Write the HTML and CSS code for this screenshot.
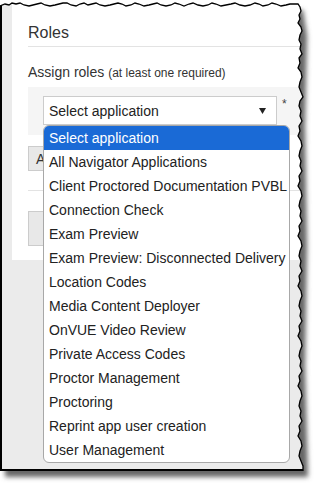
FILE: index.html
```html
<!DOCTYPE html>
<html lang="en">
<head>
    <meta charset="UTF-8">
    <meta name="viewport" content="width=device-width, initial-scale=1.0">
    <title>Roles</title>
    <link rel="stylesheet" href="styles.css">
</head>
<body>
    <div class="screen">
        <div class="panel">
            <h2 class="panel-title">Roles</h2>

            <div class="field-label">Assign roles <small>(at least one required)</small></div>

            <div class="role-box">
                <div class="select-row">
                    <div class="select-wrap">
                        <div class="select">
                            <span>Select application</span>
                            <svg class="caret" width="7" height="6" viewBox="0 0 7 6"><path d="M0 0H7L3.5 6Z" fill="#222"/></svg>
                        </div>
                        <ul class="dropdown">
                            <li class="selected">Select application</li>
                            <li>All Navigator Applications</li>
                            <li>Client Proctored Documentation PVBL</li>
                            <li>Connection Check</li>
                            <li>Exam Preview</li>
                            <li>Exam Preview: Disconnected Delivery</li>
                            <li>Location Codes</li>
                            <li>Media Content Deployer</li>
                            <li>OnVUE Video Review</li>
                            <li>Private Access Codes</li>
                            <li>Proctor Management</li>
                            <li>Proctoring</li>
                            <li>Reprint app user creation</li>
                            <li>User Management</li>
                        </ul>
                    </div>
                    <span class="required">*</span>
                </div>
            </div>

            <button class="btn">A</button>
            <hr class="divider">
            <div class="btn btn-large"></div>
        </div>
    </div>

    <!-- torn paper edge over the screenshot -->
    <svg class="torn" width="321" height="486" viewBox="0 0 321 486">
        <defs>
            <filter id="blur" x="-10%" y="-10%" width="130%" height="130%">
                <feGaussianBlur stdDeviation="2.5"/>
            </filter>
            <clipPath id="outside">
                <path clip-rule="evenodd" d="M0 0H321V486H0Z M0 6L5 4L9 5L12 3L16 4L20 3L24 5L29 6L33 5L37 4L41 3L45 5L50 6L55 5L59 4L63 3L67 3L71 5L76 6L80 4L84 3L88 5L92 4L96 3L100 5L105 6L110 5L114 4L118 3L122 4L126 6L131 5L135 3L139 4L144 6L149 5L153 4L157 3L161 5L166 6L171 5L175 3L179 4L184 6L189 4L193 3L198 5L203 6L208 5L212 3L216 4L221 6L226 5L231 4L235 3L240 5L245 6L250 5L255 3L259 4L263 6L268 5L272 3L276 4L281 6L286 5L290 4L294 4L298 4L300 7L301 11L299 15L300 19L298 23L301 27L302 31L300 35L299 40L301 44L300 49L302 54L299 58L300 63L298 68L301 72L302 77L300 82L299 87L301 92L303 97L300 101L299 106L301 111L300 116L302 121L299 126L300 131L298 136L301 141L302 146L300 151L299 156L301 161L300 166L302 171L299 176L300 181L298 186L301 191L302 196L300 201L299 206L301 211L300 216L302 221L299 226L300 231L298 236L301 241L302 246L300 251L299 256L301 261L300 266L302 271L299 276L300 281L298 286L301 291L302 296L300 301L299 306L301 311L300 316L302 321L299 326L300 331L298 336L301 341L302 346L300 351L299 356L301 361L300 366L302 371L299 376L300 381L298 386L301 391L302 396L300 401L299 406L301 411L300 416L302 421L299 426L300 431L298 436L301 441L302 446L300 451L299 456L301 461L303 466L303 471L0 471Z"/>
            </clipPath>
        </defs>
        <g clip-path="url(#outside)">
            <rect width="321" height="486" fill="#fff"/>
            <path transform="translate(5 6)" filter="url(#blur)" fill="#666" d="M0 6L298 4L302 30L300 120L302 240L300 360L303 471L0 471Z"/>
        </g>
        <path class="edge" d="M0 6L5 4L9 5L12 3L16 4L20 3L24 5L29 6L33 5L37 4L41 3L45 5L50 6L55 5L59 4L63 3L67 3L71 5L76 6L80 4L84 3L88 5L92 4L96 3L100 5L105 6L110 5L114 4L118 3L122 4L126 6L131 5L135 3L139 4L144 6L149 5L153 4L157 3L161 5L166 6L171 5L175 3L179 4L184 6L189 4L193 3L198 5L203 6L208 5L212 3L216 4L221 6L226 5L231 4L235 3L240 5L245 6L250 5L255 3L259 4L263 6L268 5L272 3L276 4L281 6L286 5L290 4L294 4L298 4L300 7L301 11L299 15L300 19L298 23L301 27L302 31L300 35L299 40L301 44L300 49L302 54L299 58L300 63L298 68L301 72L302 77L300 82L299 87L301 92L303 97L300 101L299 106L301 111L300 116L302 121L299 126L300 131L298 136L301 141L302 146L300 151L299 156L301 161L300 166L302 171L299 176L300 181L298 186L301 191L302 196L300 201L299 206L301 211L300 216L302 221L299 226L300 231L298 236L301 241L302 246L300 251L299 256L301 261L300 266L302 271L299 276L300 281L298 286L301 291L302 296L300 301L299 306L301 311L300 316L302 321L299 326L300 331L298 336L301 341L302 346L300 351L299 356L301 361L300 366L302 371L299 376L300 381L298 386L301 391L302 396L300 401L299 406L301 411L300 416L302 421L299 426L300 431L298 436L301 441L302 446L300 451L299 456L301 461L303 466L303 471"/>
    </svg>
</body>
</html>
```

FILE: styles.css
```css
body {
    margin: 0;
    background: #fff;
    font-family: "Liberation Sans", Arial, sans-serif;
    color: #333;
}
.screen {
    position: relative;
    width: 303px;
    height: 469px;
    background-color: #ebebeb;
    border-left: 2px solid #000;
    border-bottom: 2px solid #000;
    overflow: hidden;
}
.panel {
    margin-left: 10px;
    width: 330px;
    padding: 23px 0 14px 16px;
    background: #fff;
}
.panel-title {
    margin: 0;
    padding-bottom: 3px;
    font-size: 16px;
    font-weight: normal;
    line-height: 20px;
    color: #333;
    border-bottom: 1px solid #e3e3e3;
}
.field-label {
    margin-top: 15px;
    font-size: 14px;
    line-height: 20px;
    color: #333;
}
.field-label small {
    font-size: 12px;
}
.role-box {
    margin-top: 4px;
    padding: 9px 15px 10px;
    background: #f5f5f5;
}
.select-row {
    display: flex;
    align-items: flex-start;
    gap: 5px;
}
.select-wrap {
    position: relative;
}
.select {
    box-sizing: border-box;
    width: 234px;
    height: 29px;
    display: flex;
    align-items: center;
    justify-content: space-between;
    padding: 0 10px 0 5px;
    background: #fff;
    border: 1px solid #ccc;
    font-size: 14px;
    color: #222;
}
.caret {
    display: block;
}
.required {
    font-size: 12px;
    line-height: 12px;
    margin-top: 2px;
    color: #444;
}
.dropdown {
    position: absolute;
    top: 29px;
    left: 0;
    z-index: 2;
    width: 245px;
    margin: 0;
    padding: 0;
    list-style: none;
    background: #fff;
    border: 1px solid #a8a8a8;
    border-radius: 6px;
    overflow: hidden;
}
.dropdown li {
    height: 24px;
    line-height: 24px;
    padding-left: 5px;
    font-size: 14px;
    color: #222;
    white-space: nowrap;
}
.dropdown li.selected {
    background: #1a6ad6;
    color: #fff;
}
.btn {
    display: block;
    box-sizing: border-box;
    margin-top: 11px;
    width: 40px;
    height: 25px;
    padding: 0 0 0 7px;
    text-align: left;
    font-family: inherit;
    font-size: 14px;
    color: #333;
    background: #e8e8e8;
    border: 1px solid #ccc;
}
.btn-large {
    margin-top: 20px;
    height: 35px;
    width: 40px;
}
.divider {
    margin: 19px 0 0;
    border: none;
    border-top: 1px solid #e3e3e3;
}
.torn {
    position: absolute;
    top: 0;
    left: 0;
    pointer-events: none;
}
.edge {
    fill: none;
    stroke: #000;
    stroke-width: 1.3;
}
```
